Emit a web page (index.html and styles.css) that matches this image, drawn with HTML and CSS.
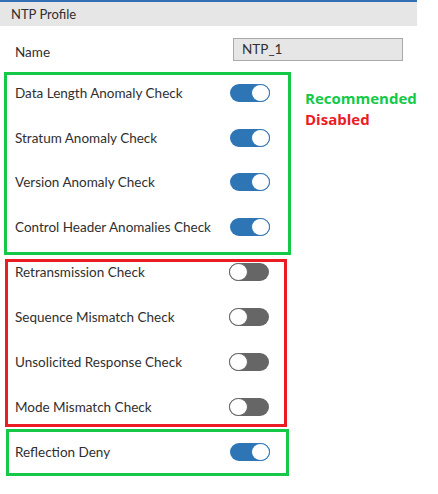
FILE: index.html
```html
<!DOCTYPE html>
<html>
<head>
<meta charset="utf-8">
<link rel="stylesheet" href="styles.css">
</head>
<body>
<div class="panel">
  <div class="topbar"></div>
  <div class="header">NTP Profile</div>
  <div class="name-row">
    <span class="name-label">Name</span>
    <div class="name-input">NTP_1</div>
  </div>
  <div class="main">
    <div class="boxes">
      <div class="box box-rec">
        <div class="row"><span class="label">Data Length Anomaly Check</span><span class="toggle on"><span class="knob"></span></span></div>
        <div class="row"><span class="label">Stratum Anomaly Check</span><span class="toggle on"><span class="knob"></span></span></div>
        <div class="row"><span class="label">Version Anomaly Check</span><span class="toggle on"><span class="knob"></span></span></div>
        <div class="row"><span class="label">Control Header Anomalies Check</span><span class="toggle on"><span class="knob"></span></span></div>
      </div>
      <div class="box box-dis">
        <div class="row"><span class="label">Retransmission Check</span><span class="toggle off"><span class="knob"></span></span></div>
        <div class="row"><span class="label">Sequence Mismatch Check</span><span class="toggle off"><span class="knob"></span></span></div>
        <div class="row"><span class="label">Unsolicited Response Check</span><span class="toggle off"><span class="knob"></span></span></div>
        <div class="row"><span class="label">Mode Mismatch Check</span><span class="toggle off"><span class="knob"></span></span></div>
      </div>
      <div class="box box-ref">
        <div class="row"><span class="label">Reflection Deny</span><span class="toggle on"><span class="knob"></span></span></div>
      </div>
    </div>
    <div class="legend">
      <div class="legend-rec">Recommended</div>
      <div class="legend-dis">Disabled</div>
    </div>
  </div>
</div>
</body>
</html>
```

FILE: styles.css
```css
html, body {
  margin: 0;
  padding: 0;
  background: #ffffff;
}
body {
  font-family: Lato, "Open Sans", "Liberation Sans", sans-serif;
  font-size: 13.5px;
  color: #2f2f2f;
}
.panel {
  width: 438px;
}
.topbar {
  width: 417px;
  height: 2px;
  background: #3270b6;
}
.header {
  width: 406px;
  height: 24px;
  line-height: 24px;
  padding-left: 11px;
  background: #e6e6e6;
  font-size: 13px;
}
.name-row {
  display: flex;
  align-items: center;
  margin-top: 12px;
  padding-left: 15px;
}
.name-label {
  width: 218px;
  padding-top: 5px;
}
.name-input {
  box-sizing: border-box;
  width: 170px;
  height: 23px;
  line-height: 21px;
  padding-left: 8px;
  border: 1px solid #aaaaaa;
  background: #e6e6e6;
}
.main {
  display: flex;
  margin-top: 11px;
}
.boxes {
  display: flex;
  flex-direction: column;
  width: 291px;
}
.box {
  box-sizing: border-box;
  border: 3px solid;
  display: flex;
  flex-direction: column;
  gap: 25px;
}
.box-rec {
  border-color: #14c948;
  margin-left: 4px;
  width: 287px;
  height: 183px;
  padding: 8px 18px 0 8px;
  gap: 24.6px;
}
.box-dis {
  border-color: #ec1c24;
  margin-top: 4px;
  margin-left: 5px;
  width: 282px;
  height: 168px;
  padding: 0 15px 0 7px;
}
.box-ref {
  border-color: #14c948;
  margin-top: 2px;
  margin-left: 6px;
  width: 283px;
  height: 47px;
  padding: 10px 16px 0 6px;
}
.row {
  display: flex;
  align-items: center;
  justify-content: space-between;
  height: 20px;
}
.label {
  white-space: nowrap;
}
.toggle {
  position: relative;
  display: block;
  width: 40px;
  height: 18px;
  border-radius: 9px;
}
.toggle.on {
  background: #2e75b6;
}
.toggle.off {
  background: #666666;
}
.knob {
  position: absolute;
  top: 0;
  width: 19px;
  height: 18px;
  box-sizing: border-box;
  border-radius: 50%;
  background: #ffffff;
}
.toggle.on .knob {
  right: 0;
  border: 1.5px solid #2e75b6;
}
.toggle.off .knob {
  left: 0;
  border: 1.5px solid #666666;
}
.legend {
  margin-left: 14px;
  padding-top: 16px;
  font-family: "Open Sans", "Liberation Sans", sans-serif;
  font-weight: 700;
  font-size: 15px;
  line-height: 21px;
}
.legend-rec {
  color: #14c948;
}
.legend-dis {
  color: #ec1c24;
}
```
